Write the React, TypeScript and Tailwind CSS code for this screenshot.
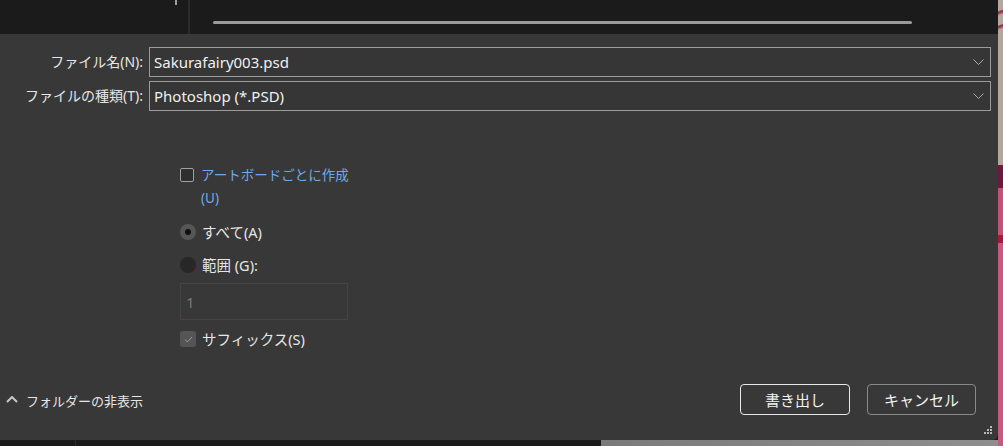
import React from 'react';

const font = { fontFamily: '"Noto Sans", "Noto Sans CJK JP", sans-serif' };

function Chevron({ className = '' }: { className?: string }) {
    return (
        <svg width="11" height="7" viewBox="0 0 11 7" className={className}>
            <polyline points="0.5,0.5 5.5,5.5 10.5,0.5" fill="none" stroke="#a8a8a8" strokeWidth="1" />
        </svg>
    );
}

function SelectField({ value }: { value: string }) {
    return (
        <div className="flex h-[30px] w-[842px] items-center justify-between border border-[#9c9c9c] bg-[#363636] pl-[4px] pr-[6px]">
            <span className="text-[15px] leading-[20px] text-[#f0f0f0]">{value}</span>
            <Chevron />
        </div>
    );
}

function ResizeGrip() {
    const dots = [
        [6, 0], [6, 3], [3, 3], [6, 6], [3, 6], [0, 6],
    ];
    return (
        <svg width="9" height="9" viewBox="0 0 9 9" className="absolute bottom-[5px] right-[5px]">
            {dots.map(([x, y]) => (
                <rect key={`${x}-${y}`} x={x} y={y} width="2" height="2" fill="#b8b8b8" />
            ))}
        </svg>
    );
}

export default function App() {
    return (
        <div className="flex h-[446px] w-[1003px] overflow-hidden bg-[#1b1b1b]" style={font}>
            <div className="flex w-[998px] flex-col">
                {/* background strip above the dialog */}
                <div className="flex h-[34px] shrink-0">
                    <div className="ml-[175px] h-[5px] w-[2px] bg-[#a0a0a0]" />
                    <div className="ml-[11px] h-full w-[2px] bg-[#2a2a2a]" />
                    <div className="ml-[23px] mt-[21px] h-[3px] w-[699px] rounded-full bg-[#9a9a9a]" />
                </div>

                {/* dialog panel */}
                <div className="relative flex h-[406px] shrink-0 flex-col rounded-br-[6px] bg-[#383838] text-[14px] leading-[20px] text-[#e6e6e6]">
                    <div className="mt-[13px] flex flex-col gap-[4px]">
                        <div className="flex items-center gap-[6px]">
                            <div className="w-[143px] text-right">ファイル名(N):</div>
                            <SelectField value="Sakurafairy003.psd" />
                        </div>
                        <div className="flex items-center gap-[6px]">
                            <div className="w-[143px] text-right">ファイルの種類(T):</div>
                            <SelectField value="Photoshop (*.PSD)" />
                        </div>
                    </div>

                    <div className="ml-[180px] mt-[53px] flex flex-col">
                        <div className="flex items-start gap-[7px]">
                            <div className="mt-[4px] h-[14px] w-[14px] shrink-0 rounded-[2px] border border-[#a0a0a0] bg-[#2e2e2e]" />
                            <div className="w-[165px] text-[13.5px] leading-[23px] text-[#6fa9ec]">
                                アートボードごとに作成
                                <br />
                                (U)
                            </div>
                        </div>

                        <div className="mt-[12px] flex h-[20px] items-center gap-[6px]">
                            <div className="flex h-[16px] w-[16px] items-center justify-center rounded-full bg-[#565656]">
                                <div className="h-[6px] w-[6px] rounded-full bg-[#111]" />
                            </div>
                            <span className="text-[14.5px]">すべて(A)</span>
                        </div>

                        <div className="mt-[13px] flex h-[20px] items-center gap-[6px]">
                            <div className="h-[16px] w-[16px] rounded-full bg-[#272727]" />
                            <span className="text-[14.5px]">範囲 (G):</span>
                        </div>

                        <div className="mt-[8px] flex h-[37px] w-[168px] items-center border border-[#454545] pl-[5px] text-[15px] text-[#777]">
                            1
                        </div>

                        <div className="mt-[9px] flex h-[20px] items-center gap-[6px]">
                            <div className="flex h-[16px] w-[16px] items-center justify-center rounded-[3px] bg-[#555]">
                                <svg width="9" height="7" viewBox="0 0 9 7">
                                    <polyline points="1,3.5 3.5,6 8,1" fill="none" stroke="#9a9a9a" strokeWidth="1" />
                                </svg>
                            </div>
                            <span className="text-[14.5px]">サフィックス(S)</span>
                        </div>
                    </div>

                    <div className="mt-[35px] flex items-center justify-between pr-[22px]">
                        <div className="flex items-center gap-[8px] pl-[6px]">
                            <svg width="12" height="7" viewBox="0 0 12 7">
                                <polyline points="1,6 6,1 11,6" fill="none" stroke="#c8c8c8" strokeWidth="2" />
                            </svg>
                            <span className="mt-[3px] text-[13px]">フォルダーの非表示</span>
                        </div>
                        <div className="flex gap-[17px]">
                            <button className="h-[31px] w-[110px] rounded-[4px] border border-[#e8e8e8] text-[15px] text-[#f2f2f2]">
                                書き出し
                            </button>
                            <button className="h-[31px] w-[109px] rounded-[4px] border border-[#8a8a8a] text-[15px] text-[#f2f2f2]">
                                キャンセル
                            </button>
                        </div>
                    </div>

                    <ResizeGrip />
                </div>

                {/* background strip below the dialog */}
                <div className="flex h-[6px] shrink-0">
                    <div className="w-[75px] bg-[#1a1a1a]" />
                    <div className="w-[1px] bg-[#2c2c2c]" />
                    <div className="w-[525px] bg-[#1a1a1a]" />
                    <div className="flex-1 bg-gradient-to-r from-[#7a7a7a] to-[#8e8e8e]" />
                </div>
            </div>

            {/* artwork peeking out at the right edge */}
            <div className="flex w-[5px] flex-col">
                <div className="h-[34px] bg-[linear-gradient(160deg,#b4a89e_0%,#b4a89e_30%,#8a2040_35%,#b4a89e_45%,#b4a89e_70%,#8a2040_75%,#b4a89e_85%)]" />
                <div className="h-[131px] bg-[#b3a79d]" />
                <div className="h-[23px] bg-[#6a1a3a]" />
                <div className="h-[47px] bg-[#c05478]" />
                <div className="h-[8px] bg-[#a8183c]" />
                <div className="flex-1 bg-[#c45a80]" />
            </div>
        </div>
    );
}
